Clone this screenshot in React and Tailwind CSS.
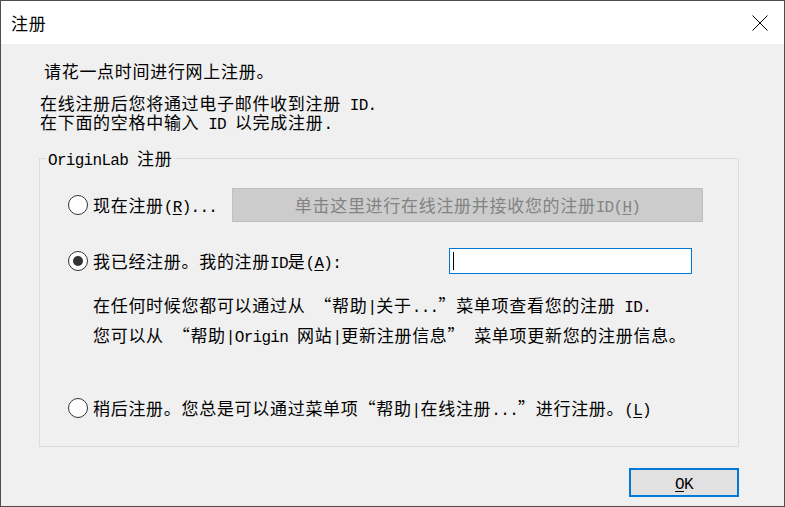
import React from "react";

// Latin runs are set half-width, like the dialog font in the screenshot
function L({ children, u }) {
  return (
    <span className="font-['Liberation_Mono',monospace] text-[16px] leading-[1] tracking-[-0.7px]">
      {children}
      {u ? <span className="underline underline-offset-2">{u}</span> : null}
    </span>
  );
}

function Radio({ checked }) {
  return (
    <span className="flex h-[20px] w-[20px] shrink-0 items-center justify-center rounded-full border border-[#333333] bg-white">
      {checked ? <span className="h-[10px] w-[10px] rounded-full bg-[#333333]" /> : null}
    </span>
  );
}

export default function App() {
  return (
    <div className="flex h-[507px] w-[785px] flex-col overflow-hidden border border-[#4d4d4d] bg-[#f0f0f0] font-['Noto_Sans_CJK_SC',sans-serif] text-[17px] leading-[19px] tracking-[0.7px] text-black">
      <div className="flex h-[43px] shrink-0 items-center justify-between bg-white pl-[10px] pr-[16px]">
        <span>注册</span>
        <svg width="16" height="16" viewBox="0 0 16 16" className="mt-[1px]">
          <path d="M0.5 0.5L15.5 15.5M15.5 0.5L0.5 15.5" stroke="#000" strokeWidth="1" fill="none" />
        </svg>
      </div>

      <div className="flex flex-1 flex-col pt-[17px]">
        <div className="ml-[43px] h-[19px]">请花一点时间进行网上注册。</div>
        <div className="ml-[39px] mt-[13px] h-[19px]">
          在线注册后您将通过电子邮件收到注册<L> ID.</L>
        </div>
        <div className="ml-[39px] h-[19px]">
          在下面的空格中输入<L> ID </L>以完成注册<L>.</L>
        </div>

        <fieldset className="ml-[38px] mt-[17px] h-[299px] w-[700px] border border-[#dcdcdc]">
          <legend className="ml-[6px] h-[20px] px-[2px] leading-[20px]">
            <L>OriginLab </L>注册
          </legend>

          <div className="mt-[20px] flex h-[34px] items-center pl-[28px] pr-[35px]">
            <Radio />
            <span className="ml-[5px]">
              现在注册<L u="R">(</L><L>)...</L>
            </span>
            <div className="ml-auto flex h-[34px] w-[471px] items-center justify-center border border-[#bfbfbf] bg-[#cccccc] text-[#838383]">
              <span>
                单击这里进行在线注册并接收您的注册<L>ID(</L><L u="H" /><L>)</L>
              </span>
            </div>
          </div>

          <div className="mt-[26px] flex h-[26px] items-center pl-[28px] pr-[46px]">
            <Radio checked />
            <span className="ml-[5px]">
              我已经注册。我的注册<L>ID</L>是<L u="A">(</L><L>):</L>
            </span>
            <div className="ml-auto flex h-[26px] w-[243px] items-center border border-[#0078d7] bg-white pl-[3px]">
              <span className="h-[18px] w-[1px] bg-black" />
            </div>
          </div>

          <div className="mt-[16px] pl-[53px] leading-[30px]">
            <div className="h-[30px]">
              在任何时候您都可以通过从<L> </L>“帮助<L>|</L>关于<L>...</L>”菜单项查看您的注册<L> ID.</L>
            </div>
            <div className="h-[30px]">
              您可以从<L> </L>“帮助<L>|Origin </L>网站<L>|</L>更新注册信息”<L> </L>菜单项更新您的注册信息。
            </div>
          </div>

          <div className="mt-[48px] flex h-[20px] items-center pl-[28px]">
            <Radio />
            <span className="ml-[5px]">
              稍后注册。您总是可以通过菜单项“帮助<L>|</L>在线注册<L>...</L>”进行注册。<L u="L">(</L><L>)</L>
            </span>
          </div>
        </fieldset>

        <div className="mr-[45px] mt-[21px] flex h-[29px] w-[110px] items-center justify-center self-end border-2 border-[#0078d7] bg-[#e1e1e1]">
          <span>
            <L u="O" />
            <L>K</L>
          </span>
        </div>
      </div>
    </div>
  );
}
